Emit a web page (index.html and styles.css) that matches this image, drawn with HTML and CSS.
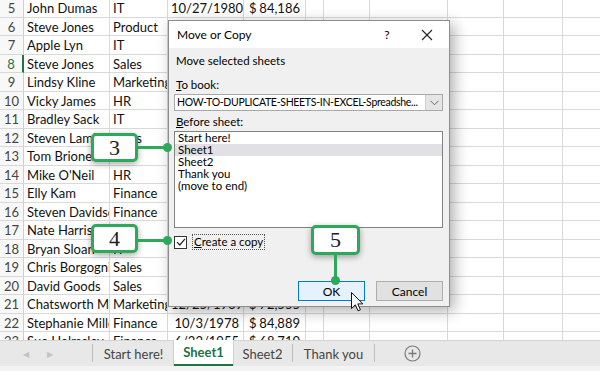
FILE: index.html
```html
<!DOCTYPE html>
<html>
<head>
<meta charset="utf-8">
<title>Move or Copy</title>
<link rel="stylesheet" href="styles.css">
</head>
<body>
<div class="app">
  <div class="sheet">
    <div class="grid">
      <div class="rh">5</div><div class="c">John Dumas</div><div class="c">IT</div><div class="c r">10/27/1980</div><div class="c money"><span>$</span><span>84,186</span></div><div class="c"></div><div class="c"></div><div class="c"></div><div class="c"></div><div class="c"></div><div class="c"></div>
      <div class="rh">6</div><div class="c">Steve Jones</div><div class="c">Product</div><div class="c"></div><div class="c"></div><div class="c"></div><div class="c"></div><div class="c"></div><div class="c"></div><div class="c"></div><div class="c"></div>
      <div class="rh">7</div><div class="c">Apple Lyn</div><div class="c">IT</div><div class="c"></div><div class="c"></div><div class="c"></div><div class="c"></div><div class="c"></div><div class="c"></div><div class="c"></div><div class="c"></div>
      <div class="rh sel">8</div><div class="c">Steve Jones</div><div class="c">Sales</div><div class="c"></div><div class="c"></div><div class="c"></div><div class="c"></div><div class="c"></div><div class="c"></div><div class="c"></div><div class="c"></div>
      <div class="rh">9</div><div class="c">Lindsy Kline</div><div class="c">Marketing</div><div class="c"></div><div class="c"></div><div class="c"></div><div class="c"></div><div class="c"></div><div class="c"></div><div class="c"></div><div class="c"></div>
      <div class="rh">10</div><div class="c">Vicky James</div><div class="c">HR</div><div class="c"></div><div class="c"></div><div class="c"></div><div class="c"></div><div class="c"></div><div class="c"></div><div class="c"></div><div class="c"></div>
      <div class="rh">11</div><div class="c">Bradley Sack</div><div class="c">IT</div><div class="c"></div><div class="c"></div><div class="c"></div><div class="c"></div><div class="c"></div><div class="c"></div><div class="c"></div><div class="c"></div>
      <div class="rh">12</div><div class="c">Steven Lambert</div><div class="c">Sales</div><div class="c"></div><div class="c"></div><div class="c"></div><div class="c"></div><div class="c"></div><div class="c"></div><div class="c"></div><div class="c"></div>
      <div class="rh">13</div><div class="c">Tom Briones</div><div class="c">IT</div><div class="c"></div><div class="c"></div><div class="c"></div><div class="c"></div><div class="c"></div><div class="c"></div><div class="c"></div><div class="c"></div>
      <div class="rh">14</div><div class="c">Mike O'Neil</div><div class="c">HR</div><div class="c"></div><div class="c"></div><div class="c"></div><div class="c"></div><div class="c"></div><div class="c"></div><div class="c"></div><div class="c"></div>
      <div class="rh">15</div><div class="c">Elly Kam</div><div class="c">Finance</div><div class="c"></div><div class="c"></div><div class="c"></div><div class="c"></div><div class="c"></div><div class="c"></div><div class="c"></div><div class="c"></div>
      <div class="rh">16</div><div class="c">Steven Davidson</div><div class="c">Finance</div><div class="c"></div><div class="c"></div><div class="c"></div><div class="c"></div><div class="c"></div><div class="c"></div><div class="c"></div><div class="c"></div>
      <div class="rh">17</div><div class="c">Nate Harrison</div><div class="c">HR</div><div class="c"></div><div class="c"></div><div class="c"></div><div class="c"></div><div class="c"></div><div class="c"></div><div class="c"></div><div class="c"></div>
      <div class="rh">18</div><div class="c">Bryan Sloan</div><div class="c">IT</div><div class="c"></div><div class="c"></div><div class="c"></div><div class="c"></div><div class="c"></div><div class="c"></div><div class="c"></div><div class="c"></div>
      <div class="rh">19</div><div class="c">Chris Borgogni</div><div class="c">Sales</div><div class="c"></div><div class="c"></div><div class="c"></div><div class="c"></div><div class="c"></div><div class="c"></div><div class="c"></div><div class="c"></div>
      <div class="rh">20</div><div class="c">David Goods</div><div class="c">Sales</div><div class="c"></div><div class="c"></div><div class="c"></div><div class="c"></div><div class="c"></div><div class="c"></div><div class="c"></div><div class="c"></div>
      <div class="rh">21</div><div class="c">Chatsworth Mills</div><div class="c">Marketing</div><div class="c r">12/25/1969</div><div class="c money"><span>$</span><span>72,555</span></div><div class="c"></div><div class="c"></div><div class="c"></div><div class="c"></div><div class="c"></div><div class="c"></div>
      <div class="rh">22</div><div class="c">Stephanie Miller</div><div class="c">Finance</div><div class="c r">10/3/1978</div><div class="c money"><span>$</span><span>84,889</span></div><div class="c"></div><div class="c"></div><div class="c"></div><div class="c"></div><div class="c"></div><div class="c"></div>
      <div class="rh">23</div><div class="c">Sue Helmsley</div><div class="c">Finance</div><div class="c r">6/22/1955</div><div class="c money"><span>$</span><span>68,710</span></div><div class="c"></div><div class="c"></div><div class="c"></div><div class="c"></div><div class="c"></div><div class="c"></div>
    </div>
  </div>

  <div class="tabbar">
    <div class="nav"><span class="arrow">&#9664;</span><span class="arrow">&#9654;</span></div>
    <div class="sep"></div>
    <div class="tab t-start">Start here!</div>
    <div class="tab active">Sheet1</div>
    <div class="tab t-s2">Sheet2</div>
    <div class="sep"></div>
    <div class="tab t-ty">Thank you</div>
    <div class="sep"></div>
    <div class="add">
      <svg width="17" height="17" viewBox="0 0 17 17"><circle cx="8.5" cy="8.5" r="7.5" fill="none" stroke="#7a7a7a" stroke-width="1.2"/><path d="M8.5 4.5v8M4.5 8.5h8" stroke="#7a7a7a" stroke-width="1.3"/></svg>
    </div>
  </div>
  <div class="status"></div>

  <div class="dialog">
    <div class="titlebar">
      <span class="title">Move or Copy</span>
      <span class="help">?</span>
      <span class="close"><svg width="12" height="12" viewBox="0 0 12 12"><path d="M1 1L11 11M11 1L1 11" stroke="#222" stroke-width="1.1"/></svg></span>
    </div>
    <div class="dbody">
      <div class="lbl">Move selected sheets</div>
      <div class="lbl gap8"><u>T</u>o book:</div>
      <div class="combo">
        <span class="combo-text">HOW-TO-DUPLICATE-SHEETS-IN-EXCEL-Spreadshe...</span>
        <span class="combo-btn"><svg width="9" height="6" viewBox="0 0 9 6"><path d="M0.5 0.8L4.5 4.8L8.5 0.8" fill="none" stroke="#666" stroke-width="1"/></svg></span>
      </div>
      <div class="lbl gap3"><u>B</u>efore sheet:</div>
      <div class="list">
        <div class="item">Start here!</div>
        <div class="item hl">Sheet1</div>
        <div class="item">Sheet2</div>
        <div class="item">Thank you</div>
        <div class="item">(move to end)</div>
      </div>
      <div class="check-row">
        <span class="checkbox"><svg width="10" height="10" viewBox="0 0 10 10"><path d="M1 5.2L3.8 8L9 1.8" fill="none" stroke="#222" stroke-width="1.2"/></svg></span>
        <span class="check-label"><u>C</u>reate a copy</span>
      </div>
      <div class="buttons">
        <span class="btn ok">OK</span>
        <span class="btn">Cancel</span>
      </div>
    </div>
  </div>

  <div class="callout co3"><span>3</span></div>
  <div class="hline h3"></div>
  <div class="dot d3"></div>

  <div class="callout co4"><span>4</span></div>
  <div class="hline h4"></div>
  <div class="dot d4"></div>

  <div class="callout co5"><span>5</span></div>
  <div class="vline v5"></div>
  <div class="dot d5"></div>

  <svg class="cursor" width="13" height="20" viewBox="0 0 13 20"><path d="M0.5 0.5V16.5L4.3 12.8L7 18.8L9.4 17.8L6.8 11.9H11.8Z" fill="#fff" stroke="#111" stroke-width="1" stroke-linejoin="round"/></svg>
</div>
</body>
</html>
```

FILE: styles.css
```css
* { box-sizing: border-box; }
html, body { margin: 0; padding: 0; }
body { width: 600px; height: 371px; overflow: hidden; background: #fff; }

.app {
  position: relative;
  width: 600px;
  height: 371px;
  display: flex;
  flex-direction: column;
  font-family: "Lato", "Liberation Sans", sans-serif;
}

.sheet { height: 340px; overflow: hidden; flex: none; }

.grid {
  margin-top: -1px;
  display: grid;
  grid-template-columns: 24px 86px 58px 76px 62px 18px 46px 78px 56px 59px 38px;
  grid-auto-rows: 18.5px;
  font-size: 13px;
  color: #111;
}

.rh {
  background: #f8f8f8;
  color: #444;
  text-align: center;
  border-right: 1px solid #cfcfcf;
  border-bottom: 1px solid #d8d8d8;
  line-height: 18px;
  font-size: 13px;
}
.rh.sel { color: #217346; border-right: 2px solid #217346; }

.c {
  border-right: 1px solid #d9d9d9;
  border-bottom: 1px solid #d9d9d9;
  padding: 0 3px 0 3px;
  line-height: 18px;
  white-space: nowrap;
  overflow: hidden;
}
.c.r { text-align: right; padding-right: 4px; }
.money { display: flex; justify-content: space-between; padding: 0 5px 0 5px; }

.tabbar {
  height: 26px;
  flex: none;
  background: #e8e8e8;
  border-top: 1px solid #d4d4d4;
  display: flex;
  align-items: stretch;
  font-size: 13px;
  color: #444;
}
.nav { width: 92px; display: flex; align-items: center; padding-left: 23px; gap: 18px; }
.arrow { color: #c4c4c4; font-size: 8px; }
.sep { width: 1px; background: #bdbdbd; margin: 3px 0 4px; }
.tab { display: flex; align-items: center; justify-content: center; }
.t-start { width: 81px; }
.active {
  width: 59px;
  background: #fff;
  color: #217346;
  font-weight: bold;
  border-bottom: 2px solid #217346;
  margin-top: -1px;
  box-shadow: 1px 0 0 #d0d0d0, -1px 0 0 #d0d0d0;
}
.t-s2 { width: 59px; }
.t-ty { width: 81px; }
.add { width: 75px; display: flex; align-items: center; justify-content: center; }

.status { flex: 1; background: #f3f3f3; }

/* Dialog */
.dialog {
  position: absolute;
  left: 168px;
  top: 20px;
  width: 282px;
  height: 287px;
  border: 1px solid #8d8d8d;
  background: #f0f0f0;
  box-shadow: 4px 4px 14px rgba(0, 0, 0, 0.32);
  font-size: 12px;
  color: #000;
  display: flex;
  flex-direction: column;
}
.titlebar {
  height: 27px;
  flex: none;
  background: #fff;
  display: flex;
  align-items: center;
  padding: 0 16px 0 8px;
}
.title { flex: 1; }
.help { width: 10px; text-align: center; margin-right: 29px; }
.close { width: 12px; height: 12px; display: flex; }

.dbody { padding: 5px 6px 0 5px; display: flex; flex-direction: column; }
.lbl { line-height: 16px; padding-left: 2px; font-size: 11.5px; }
.gap8 { margin-top: 8px; }
.gap3 { margin-top: 3px; }

.combo {
  margin-top: 1px;
  height: 17px;
  background: #fff;
  border: 1px solid #a9a9a9;
  display: flex;
  align-items: stretch;
}
.combo-text {
  flex: 1;
  padding-left: 2px;
  line-height: 15px;
  white-space: nowrap;
  overflow: hidden;
  font-size: 10.5px;
  letter-spacing: -0.3px;
}
.combo-btn { width: 17px; background: #e5e5e5; border-left: 1px solid #cfcfcf; display: flex; align-items: center; justify-content: center; }

.list {
  margin-top: 1px;
  height: 97px;
  background: #fff;
  border: 1px solid #828282;
  padding-top: 0;
}
.item { line-height: 12px; height: 12px; padding-left: 3px; font-size: 11.5px; }
.item.hl { background: #e0e0e5; }

.check-row { margin-top: 6px; height: 16px; display: flex; align-items: center; }
.checkbox {
  width: 13px; height: 13px;
  border: 1px solid #333;
  background: #fff;
  display: flex; align-items: center; justify-content: center;
}
.check-label { margin-left: 5px; padding: 0 1px; border: 1px dotted #555; line-height: 14px; font-size: 11.5px; }

.buttons { margin-top: 31px; display: flex; justify-content: flex-end; gap: 11px; }
.btn {
  width: 67px; height: 20px;
  border: 1px solid #adadad;
  background: #e1e1e1;
  display: flex; align-items: center; justify-content: center;
}
.btn.ok { border-color: #0078d7; background: #e5f1fb; }

/* Callouts */
.callout {
  position: absolute;
  width: 47px;
  height: 29px;
  border: 3px solid #2ea85a;
  border-radius: 5px;
  background: #fff;
  box-shadow: 0 2px 6px rgba(0, 0, 0, 0.35);
  display: flex; align-items: center; justify-content: center;
  font-family: "Liberation Serif", serif;
  font-size: 22px;
  color: #222;
}
.co3 { left: 91px; top: 133px; }
.co4 { left: 91px; top: 224px; }
.co5 { left: 311px; top: 225px; width: 49px; height: 30px; }

.hline { position: absolute; height: 3px; background: #2ea85a; width: 28px; left: 137px; }
.h3 { top: 146px; }
.h4 { top: 239px; }
.vline { position: absolute; width: 3px; background: #2ea85a; left: 334px; top: 254px; height: 25px; }

.dot { position: absolute; width: 9px; height: 9px; border-radius: 50%; background: #2ea85a; }
.d3 { left: 163px; top: 143px; }
.d4 { left: 163px; top: 236px; }
.d5 { left: 331px; top: 276px; }

.cursor { position: absolute; left: 351px; top: 292px; }
```
